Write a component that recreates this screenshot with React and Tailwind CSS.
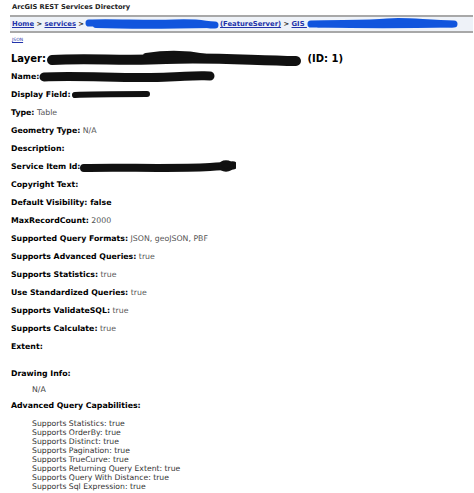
import React from 'react';

const font = { fontFamily: '"DejaVu Sans", Verdana, sans-serif' };

function Row({ label, value, bold }) {
  return (
    <div className="leading-[18px] text-[7.8px] whitespace-nowrap">
      <span className="font-bold text-black">{label}</span>
      {value !== undefined && (
        <span className={bold ? 'font-bold text-black' : 'text-[#555]'}> {value}</span>
      )}
    </div>
  );
}

function Scribble({ w, h, color = '#111', children }) {
  return (
    <svg width={w} height={h} viewBox={`0 0 ${w} ${h}`} className="inline-block align-middle shrink-0">
      <g stroke={color} fill="none" strokeLinecap="round" strokeLinejoin="round">
        {children}
      </g>
    </svg>
  );
}

const caps = [
  'Supports Statistics: true',
  'Supports OrderBy: true',
  'Supports Distinct: true',
  'Supports Pagination: true',
  'Supports TrueCurve: true',
  'Supports Returning Query Extent: true',
  'Supports Query With Distance: true',
  'Supports Sql Expression: true',
];

export default function App() {
  return (
    <div className="w-[474px] h-[493px] bg-white overflow-hidden text-black" style={font}>
      <div className="pl-[12px] pt-[2px] leading-[10px] text-[6.7px] font-bold text-[#222]">
        ArcGIS REST Services Directory
      </div>

      <div className="mt-[3px] ml-[10px] mr-[1px] h-[18px] border-t-2 border-b-2 border-[#a8a8a8] bg-[#eef2f8] flex items-center pl-[2px] text-[6.8px] font-bold whitespace-nowrap text-[#222]">
        <span className="text-[#2233aa] underline">Home</span>
        <span>&nbsp;&gt;&nbsp;</span>
        <span className="text-[#2233aa] underline">services</span>
        <span>&nbsp;&gt;</span>
        <Scribble w={136} h={14} color="#1155dd">
          <path d="M5 6 C 30 5, 60 7, 90 6 S 120 8, 131 8" strokeWidth="7" />
          <path d="M12 8 C 40 9, 80 9, 128 8" strokeWidth="6" />
        </Scribble>
        <span className="text-[#2233aa] underline">(FeatureServer)</span>
        <span>&nbsp;&gt;&nbsp;</span>
        <span className="text-[#2233aa] underline">GIS&nbsp;</span>
        <Scribble w={152} h={14} color="#1155dd">
          <path d="M4 7 C 30 6, 60 7, 80 5 S 120 7, 147 7" strokeWidth="7" />
          <path d="M12 8 C 50 9, 100 9, 145 8" strokeWidth="5" />
        </Scribble>
      </div>

      <div className="mt-[3px] pl-[12px] leading-[8px] text-[4.5px] text-[#2233aa] underline">JSON</div>

      <div className="mt-[5px] pl-[11px] leading-[19px] text-[10px] font-bold whitespace-nowrap flex items-center">
        <span>Layer:</span>
        <Scribble w={258} h={18}>
          <path d="M6 10 C 40 8, 80 11, 120 9 S 200 10, 250 11" strokeWidth="10" />
          <path d="M100 6 C 120 3, 140 3, 160 7" strokeWidth="6" />
        </Scribble>
        <span>&nbsp;(ID: 1)</span>
      </div>

      <div className="pl-[11px]">
        <div className="leading-[18px] text-[7.8px] font-bold flex items-center">
          <span>Name:</span>
          <Scribble w={176} h={14}>
            <path d="M5 7 C 40 5, 90 9, 130 7 S 160 6, 171 6" strokeWidth="9" />
          </Scribble>
        </div>
        <div className="leading-[18px] text-[7.8px] font-bold flex items-center">
          <span>Display Field:</span>
          <Scribble w={80} h={10}>
            <path d="M4 5 C 20 4, 50 4, 76 4" strokeWidth="6" />
          </Scribble>
        </div>
        <Row label="Type:" value="Table" />
        <Row label="Geometry Type:" value="N/A" />
        <Row label="Description:" />
        <div className="leading-[18px] text-[7.8px] font-bold flex items-center">
          <span>Service Item Id:</span>
          <Scribble w={156} h={14}>
            <path d="M4 8 C 40 7, 90 9, 130 7 S 146 5, 150 6" strokeWidth="8" />
            <ellipse cx="146" cy="6" rx="6" ry="4" strokeWidth="3.5" />
          </Scribble>
        </div>
        <Row label="Copyright Text:" />
        <Row label="Default Visibility:" value="false" bold />
        <Row label="MaxRecordCount:" value="2000" />
        <Row label="Supported Query Formats:" value="JSON, geoJSON, PBF" />
        <Row label="Supports Advanced Queries:" value="true" />
        <Row label="Supports Statistics:" value="true" />
        <Row label="Use Standardized Queries:" value="true" />
        <Row label="Supports ValidateSQL:" value="true" />
        <Row label="Supports Calculate:" value="true" />
        <Row label="Extent:" />

        <div className="mt-[9px]">
          <Row label="Drawing Info:" />
        </div>
        <div className="pl-[21px] leading-[14px] text-[7.8px] text-[#444]">N/A</div>
        <Row label="Advanced Query Capabilities:" />
        <div className="mt-[4px] pl-[21px] text-[7.7px] leading-[9px] text-[#333] whitespace-nowrap">
          {caps.map(c => (
            <div key={c}>{c}</div>
          ))}
        </div>
      </div>
    </div>
  );
}
